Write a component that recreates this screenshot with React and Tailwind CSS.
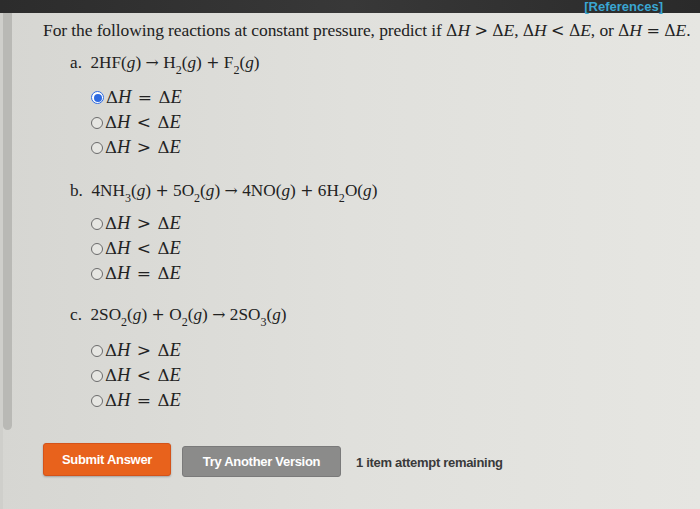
import React from "react";

const serif = { fontFamily: '"Liberation Serif", "DejaVu Serif", serif' };
const dv = { fontFamily: '"DejaVu Serif", serif' };

function I({ children }) {
  return <span className="italic">{children}</span>;
}
function Sub({ children }) {
  return <sub className="text-[0.7em] align-baseline" style={{ verticalAlign: "-0.2em" }}>{children}</sub>;
}
function Op({ children }) {
  return <span className="mx-[0.28em] text-[0.92em]" style={dv}>{children}</span>;
}
function OpW({ children }) {
  return <span className="mx-[0.38em] text-[0.92em]" style={dv}>{children}</span>;
}
function D() {
  return <span className="text-[0.9em]" style={dv}>Δ</span>;
}
function G() {
  return (
    <>
      (<I>g</I>)
    </>
  );
}

function Rel({ op }) {
  return (
    <span>
      <D /><I>H</I>
      <OpW>{op}</OpW><D /><I>E</I>
    </span>
  );
}

function Radio({ checked }) {
  if (checked) {
    return (
      <span className="inline-flex items-center justify-center w-[13px] h-[13px] rounded-full border-[1.5px] border-[#2f6be0] bg-white mr-[2px]">
        <span className="w-[8px] h-[8px] rounded-full bg-[#2f6be0]" />
      </span>
    );
  }
  return <span className="inline-block w-[12px] h-[12px] rounded-full border-[1.5px] border-[#6b6b6b] bg-[#e6e6e2] mr-[2px]" />;
}

function Options({ items, checkedIndex = -1, className = "" }) {
  return (
    <div className={"flex flex-col pl-[21px] " + className}>
      {items.map((op, i) => (
        <div key={i} className="h-[25px] flex items-center text-[18.5px]" style={serif}>
          <Radio checked={i === checkedIndex} />
          <Rel op={op} />
        </div>
      ))}
    </div>
  );
}

export default function App() {
  return (
    <div className="w-[700px] h-[509px] overflow-hidden flex flex-col bg-gradient-to-r from-[#d6d6d2] via-[#e0e0dc] to-[#e6e6e2] text-[#222]">
      <div className="h-[13px] bg-gradient-to-r from-[#2c2c2c] via-[#383838] to-[#2a2a2a] flex justify-end pr-[37px] shrink-0">
        <span
          className="text-[13px] leading-[13px] font-bold text-[#3aa6d2] tracking-[0px]"
          style={{ fontFamily: '"Liberation Sans", Arial, sans-serif' }}
        >
          [References]
        </span>
      </div>
      <div className="flex flex-1">
        <div className="w-[12px] flex shrink-0">
          <div className="w-[3px] bg-[#cfcfcb]" />
          <div className="w-[9px] h-[417px] bg-[#b9b9b5] rounded-b-[5px]" />
        </div>
        <div className="flex-1 pl-[31px] pt-[5px]">
          <div className="h-[25px] flex items-center text-[17.5px] tracking-[-0.1px]" style={serif}>
            <span>
              For the following reactions at constant pressure, predict if <D /><I>H</I>
              <Op>&gt;</Op><D /><I>E</I>, <D /><I>H</I>
              <Op>&lt;</Op><D /><I>E</I>, or <D /><I>H</I>
              <Op>=</Op><D /><I>E</I>.
            </span>
          </div>
          <div className="pl-[27px]">
            <div className="h-[24px] mt-[8px] flex items-center text-[17.2px]" style={serif}>
              <span>
                a.&nbsp; 2HF<G />
                <Op>→</Op>H<Sub>2</Sub>
                <G />
                <Op>+</Op>F<Sub>2</Sub>
                <G />
              </span>
            </div>
            <Options items={["=", "<", ">"]} checkedIndex={0} className="mt-[10px]" />
            <div className="h-[24px] mt-[19px] flex items-center text-[17.2px]" style={serif}>
              <span>
                b.&nbsp; 4NH<Sub>3</Sub>
                <G />
                <Op>+</Op>5O<Sub>2</Sub>
                <G />
                <Op>→</Op>4NO<G />
                <Op>+</Op>6H<Sub>2</Sub>O<G />
              </span>
            </div>
            <Options items={[">", "<", "="]} className="mt-[8px]" />
            <div className="h-[24px] mt-[17px] flex items-center text-[17.2px]" style={serif}>
              <span>
                c.&nbsp; 2SO<Sub>2</Sub>
                <G />
                <Op>+</Op>O<Sub>2</Sub>
                <G />
                <Op>→</Op>2SO<Sub>3</Sub>
                <G />
              </span>
            </div>
            <Options items={[">", "<", "="]} className="mt-[11px]" />
          </div>
          <div
            className="flex items-center mt-[29px] gap-[11px]"
            style={{ fontFamily: '"Liberation Sans", Arial, sans-serif' }}
          >
            <div className="w-[128px] h-[33px] bg-[#e8621c] border border-[#d4531a] rounded-[3px] flex items-center justify-center text-white font-bold text-[13px] tracking-[-0.3px] shadow-[0_1px_2px_rgba(0,0,0,0.25)]">
              Submit Answer
            </div>
            <div className="w-[159px] h-[31px] mt-[4px] bg-[#8b8b8a] border border-[#7a7a7a] rounded-[3px] flex items-center justify-center text-white font-bold text-[13px] tracking-[-0.3px]">
              Try Another Version
            </div>
            <div className="ml-[4px] mt-[6px] text-[13px] font-bold text-[#3a3a3a] tracking-[-0.3px]">
              1 item attempt remaining
            </div>
          </div>
        </div>
      </div>
    </div>
  );
}
